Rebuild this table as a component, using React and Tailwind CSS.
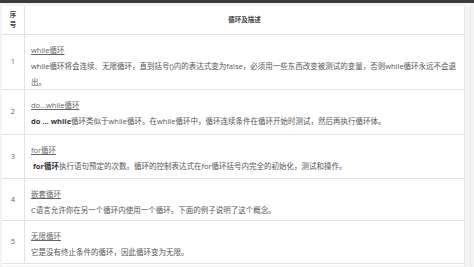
import React from 'react';

const rows = [
  {
    id: 1,
    h: 'h-[55px]',
    title: 'while循环',
    lines: [
      'while循环将会连续、无限循环，直到括号()内的表达式变为false，必须用一些东西改变被测试的变量，否则while循环永远不会退',
      '出。',
    ],
  },
  {
    id: 2,
    h: 'h-[45px]',
    title: 'do...while循环',
    lines: [<><b className="font-bold text-[#333]">do ... while</b>循环类似于while循环。在while循环中，循环连续条件在循环开始时测试，然后再执行循环体。</>],
  },
  {
    id: 3,
    h: 'h-[44px]',
    title: 'for循环',
    lines: [<>&nbsp;<b className="font-bold text-[#333]">for循环</b>执行语句预定的次数。循环的控制表达式在for循环括号内完全的初始化，测试和操作。</>],
  },
  {
    id: 4,
    h: 'h-[42px]',
    title: '嵌套循环',
    lines: ['C语言允许你在另一个循环内使用一个循环。下面的例子说明了这个概念。'],
  },
  {
    id: 5,
    h: 'h-[43px]',
    title: '无限循环',
    lines: ['它是没有终止条件的循环，因此循环变为无限。'],
  },
];

export default function App() {
  return (
    <div
      className="w-[474px] h-[267px] overflow-hidden bg-[#f4f4f4] text-[#555]"
      style={{ fontFamily: '"Open Sans", "Noto Sans CJK SC", sans-serif' }}
    >
      <div className="h-[3px] bg-[#3b3b3b]" />
      <div className="flex pt-[3px]">
        <div className="ml-[2px] w-[463px] bg-white border-r border-[#e6e6e6]">
          {/* header */}
          <div className="flex h-[29px] border-b border-[#e3e3e3]">
            <div className="w-[23px] flex items-center justify-center border-r border-[#e3e3e3] text-[6.5px] font-bold text-[#444] leading-[10px] text-center px-[6px]">
              序号
            </div>
            <div className="flex-1 flex items-center justify-center text-[6.5px] font-bold text-[#444]">
              循环及描述
            </div>
          </div>
          {rows.map((row) => (
            <div key={row.id} className={`flex border-b border-[#e3e3e3] ${row.h}`}>
              <div className="w-[23px] shrink-0 flex items-center justify-center border-r border-[#e3e3e3] text-[7.5px] text-[#666]">
                {row.id}
              </div>
              <div className="flex-1 min-w-0 pl-[6px] pr-[2px] pt-[7px] text-[7.5px]">
                <div className="h-[16px] leading-[16px]">
                  <span className="underline text-[#666]">{row.title}</span>
                </div>
                {row.lines.map((line, i) => (
                  <p key={i} className="h-[16px] leading-[16px] whitespace-nowrap">{line}</p>
                ))}
              </div>
            </div>
          ))}
        </div>
        <div className="ml-[5px] w-px h-[260px] bg-[#e8e8e8]" />
      </div>
    </div>
  );
}
